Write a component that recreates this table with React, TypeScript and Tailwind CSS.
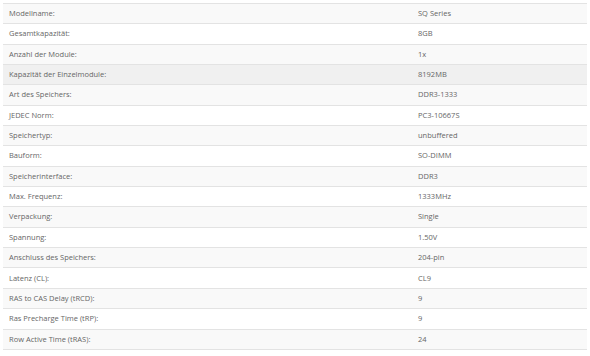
import React from "react";

const rows: [string, string][] = [
  ["Modellname:", "SQ Series"],
  ["Gesamtkapazität:", "8GB"],
  ["Anzahl der Module:", "1x"],
  ["Kapazität der Einzelmodule:", "8192MB"],
  ["Art des Speichers:", "DDR3-1333"],
  ["JEDEC Norm:", "PC3-10667S"],
  ["Speichertyp:", "unbuffered"],
  ["Bauform:", "SO-DIMM"],
  ["Speicherinterface:", "DDR3"],
  ["Max. Frequenz:", "1333MHz"],
  ["Verpackung:", "Single"],
  ["Spannung:", "1.50V"],
  ["Anschluss des Speichers:", "204-pin"],
  ["Latenz (CL):", "CL9"],
  ["RAS to CAS Delay (tRCD):", "9"],
  ["Ras Precharge Time (tRP):", "9"],
  ["Row Active Time (tRAS):", "24"],
];

const App = () => {
  return (
    <div className="w-[590px] h-[356px] bg-white pt-[3px] px-[3px] font-['Open_Sans',sans-serif] text-[7.5px] text-[#666]">
      <div className="flex flex-col border-b border-[#e3e3e3]">
        {rows.map(([label, value], i) => (
          <div
            key={label}
            className={
              "flex items-center h-[20.35px] border-t border-[#e3e3e3] " +
              (i === 3 ? "bg-[#f0f0f0]" : i % 2 === 0 ? "bg-[#f9f9f9]" : "bg-white")
            }
          >
            <div className="w-[409px] pl-[6px]">{label}</div>
            <div className="flex-1 pl-[6px]">{value}</div>
          </div>
        ))}
      </div>
    </div>
  );
};

export default App;
